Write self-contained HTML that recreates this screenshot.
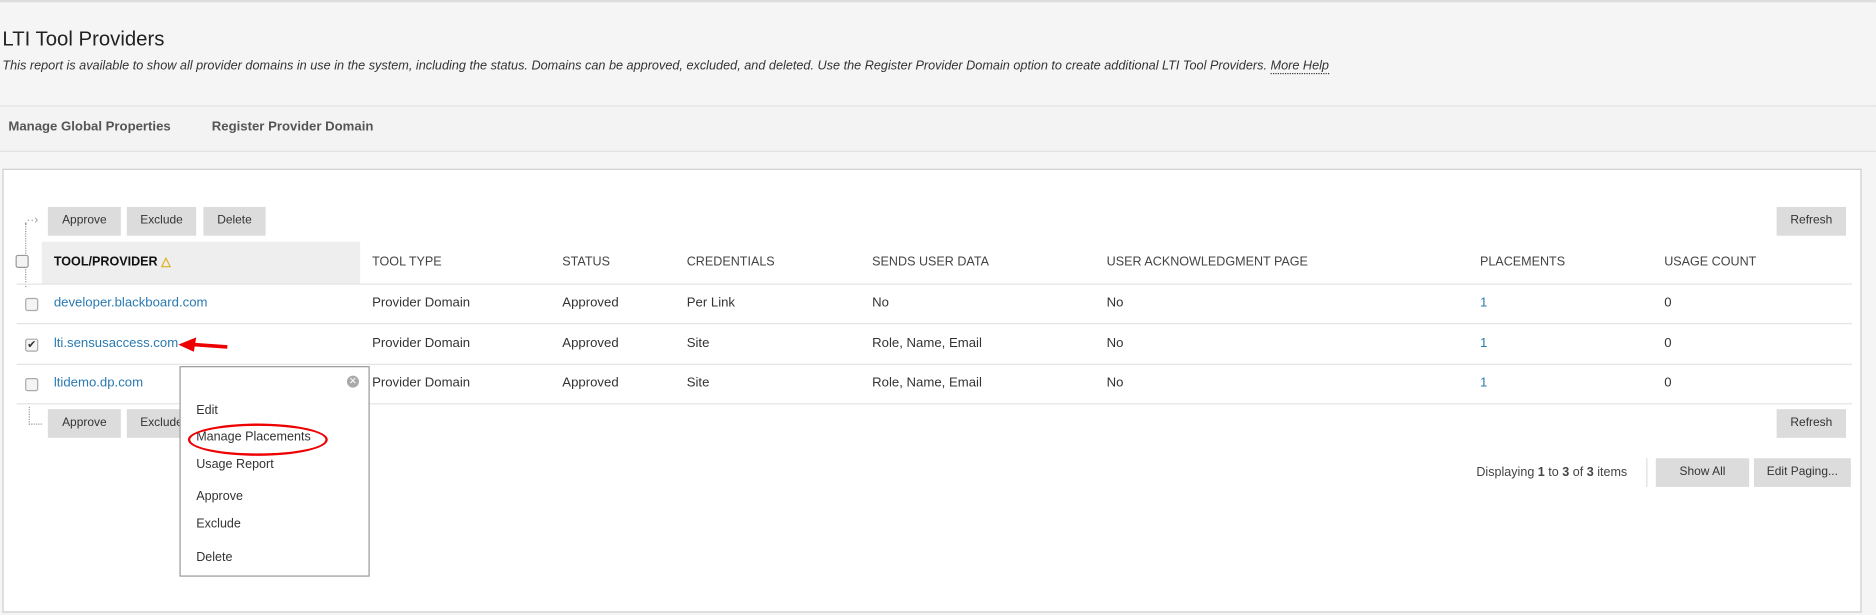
<html><head><style>
body{margin:0;width:1876px;height:615px;background:#f5f5f5;font-family:"Liberation Sans",sans-serif;overflow:hidden;color:#333}
#w{position:absolute;left:0;top:0;width:1568px;height:514px;transform:scale(1.1964);transform-origin:0 0}
.a{position:absolute;white-space:nowrap}
.btn{position:absolute;background:#dcdcdc;font-size:10px;color:#333;text-align:center;line-height:24px;height:24px}
.h{font-size:10.5px;color:#444;top:213px}
.c{font-size:11px;color:#333}
.l{color:#2a7ab0}
.line{position:absolute;left:14px;width:1534px;height:1px;background:#e4e4e4}
.m{font-size:10.5px;color:#333;left:164px}
</style></head><body><div id="w">
<div class="a" style="left:0;top:0;width:1568px;height:2px;background:#ddd"></div>
<div class="a" style="left:2px;top:23px;font-size:17px;color:#222">LTI Tool Providers</div>
<div class="a" style="left:2px;top:49px;font-size:10.6px;font-style:italic;color:#333">This report is available to show all provider domains in use in the system, including the status. Domains can be approved, excluded, and deleted. Use the Register Provider Domain option to create additional LTI Tool Providers. <span style="border-bottom:1px dotted #333">More Help</span></div>
<div class="a" style="left:0;top:88px;width:1568px;height:37px;background:#f3f3f3;border-top:1px solid #e2e2e2;border-bottom:1px solid #e2e2e2"></div>
<div class="a" style="left:7px;top:100px;font-size:11px;font-weight:bold;color:#555">Manage Global Properties</div>
<div class="a" style="left:177px;top:100px;font-size:11px;font-weight:bold;color:#555">Register Provider Domain</div>
<div class="a" style="left:2px;top:141px;height:369px;background:#fff;border:1px solid #ccc;width:1552px"></div>
<div class="a" style="left:21px;top:186px;width:10px;height:54px;border-left:1px dotted #999"></div>
<div class="a" style="left:22px;top:179px;font-size:10px;color:#999">··›</div>
<div class="btn" style="left:40px;top:173px;width:61px">Approve</div>
<div class="btn" style="left:106px;top:173px;width:58px">Exclude</div>
<div class="btn" style="left:170px;top:173px;width:52px">Delete</div>
<div class="btn" style="left:1485px;top:173px;width:58px">Refresh</div>
<div class="a" style="left:35px;top:202px;width:266px;height:35px;background:#eee"></div>
<div class="a" style="left:13px;top:213px;width:9px;height:9px;border:1px solid #999;border-radius:2px;background:#f4f4f4"></div>
<div class="a h" style="left:45px;font-weight:bold;color:#111">TOOL/PROVIDER <span style="color:#e0b020">△</span></div>
<div class="a h" style="left:311px">TOOL TYPE</div>
<div class="a h" style="left:470px">STATUS</div>
<div class="a h" style="left:574px">CREDENTIALS</div>
<div class="a h" style="left:729px">SENDS USER DATA</div>
<div class="a h" style="left:925px">USER ACKNOWLEDGMENT PAGE</div>
<div class="a h" style="left:1237px">PLACEMENTS</div>
<div class="a h" style="left:1391px">USAGE COUNT</div>
<div class="line" style="top:237px"></div><div class="line" style="top:270px"></div><div class="line" style="top:304px"></div><div class="line" style="top:337px"></div>
<div class="a" style="left:21px;top:249px;width:9px;height:9px;border:1px solid #aaa;border-radius:2px;background:#f4f4f4"></div>
<div class="a" style="left:21px;top:283px;width:9px;height:9px;border:1px solid #aaa;border-radius:2px;background:#f4f4f4;font-size:9px;line-height:9px;text-align:center">✔</div>
<div class="a" style="left:21px;top:316px;width:9px;height:9px;border:1px solid #aaa;border-radius:2px;background:#f4f4f4"></div>
<div class="a c l" style="left:45px;top:247px">developer.blackboard.com</div>
<div class="a c l" style="left:45px;top:281px">lti.sensusaccess.com</div>
<div class="a c l" style="left:45px;top:314px">ltidemo.dp.com</div>
<svg class="a" style="left:148px;top:280px" width="44" height="16"><path d="M42 10 L14 8" stroke="#e00" stroke-width="3"/><path d="M1 8 L16 2 L14 14Z" fill="#e00"/></svg>
<div class="a c" style="left:311px;top:247px">Provider Domain</div><div class="a c" style="left:470px;top:247px">Approved</div><div class="a c" style="left:574px;top:247px">Per Link</div><div class="a c" style="left:729px;top:247px">No</div><div class="a c" style="left:925px;top:247px">No</div><div class="a c l" style="left:1237px;top:247px">1</div><div class="a c" style="left:1391px;top:247px">0</div>
<div class="a c" style="left:311px;top:281px">Provider Domain</div><div class="a c" style="left:470px;top:281px">Approved</div><div class="a c" style="left:574px;top:281px">Site</div><div class="a c" style="left:729px;top:281px">Role, Name, Email</div><div class="a c" style="left:925px;top:281px">No</div><div class="a c l" style="left:1237px;top:281px">1</div><div class="a c" style="left:1391px;top:281px">0</div>
<div class="a c" style="left:311px;top:314px">Provider Domain</div><div class="a c" style="left:470px;top:314px">Approved</div><div class="a c" style="left:574px;top:314px">Site</div><div class="a c" style="left:729px;top:314px">Role, Name, Email</div><div class="a c" style="left:925px;top:314px">No</div><div class="a c l" style="left:1237px;top:314px">1</div><div class="a c" style="left:1391px;top:314px">0</div>
<div class="a" style="left:24px;top:340px;width:10px;height:14px;border-left:1px dotted #999;border-bottom:1px dotted #999"></div>
<div class="btn" style="left:40px;top:342px;width:61px">Approve</div>
<div class="btn" style="left:106px;top:342px;width:58px">Exclude</div>
<div class="btn" style="left:1485px;top:342px;width:58px">Refresh</div>
<div class="a" style="left:1234px;top:389px;font-size:10.5px;color:#444">Displaying <b>1</b> to <b>3</b> of <b>3</b> items</div>
<div class="a" style="left:1376px;top:383px;width:1px;height:24px;background:#ddd"></div>
<div class="btn" style="left:1384px;top:383px;width:78px">Show All</div>
<div class="btn" style="left:1466px;top:383px;width:81px">Edit Paging...</div>
<div class="a" style="left:150px;top:306px;width:157px;height:174px;background:#fff;border:1px solid #999"></div>
<div class="a" style="left:290px;top:314px;width:10px;height:10px;border-radius:50%;background:#aaa;color:#fff;font-size:8px;line-height:10px;text-align:center">✕</div>
<div class="a m" style="top:337px">Edit</div>
<div class="a m" style="top:359px">Manage Placements</div>
<div class="a m" style="top:382px">Usage Report</div>
<div class="a m" style="top:409px">Approve</div>
<div class="a m" style="top:432px">Exclude</div>
<div class="a m" style="top:460px">Delete</div>
<div class="a" style="left:157px;top:354px;width:113px;height:23px;border:2.5px solid #e00;border-radius:50%"></div>
</div></body></html>
